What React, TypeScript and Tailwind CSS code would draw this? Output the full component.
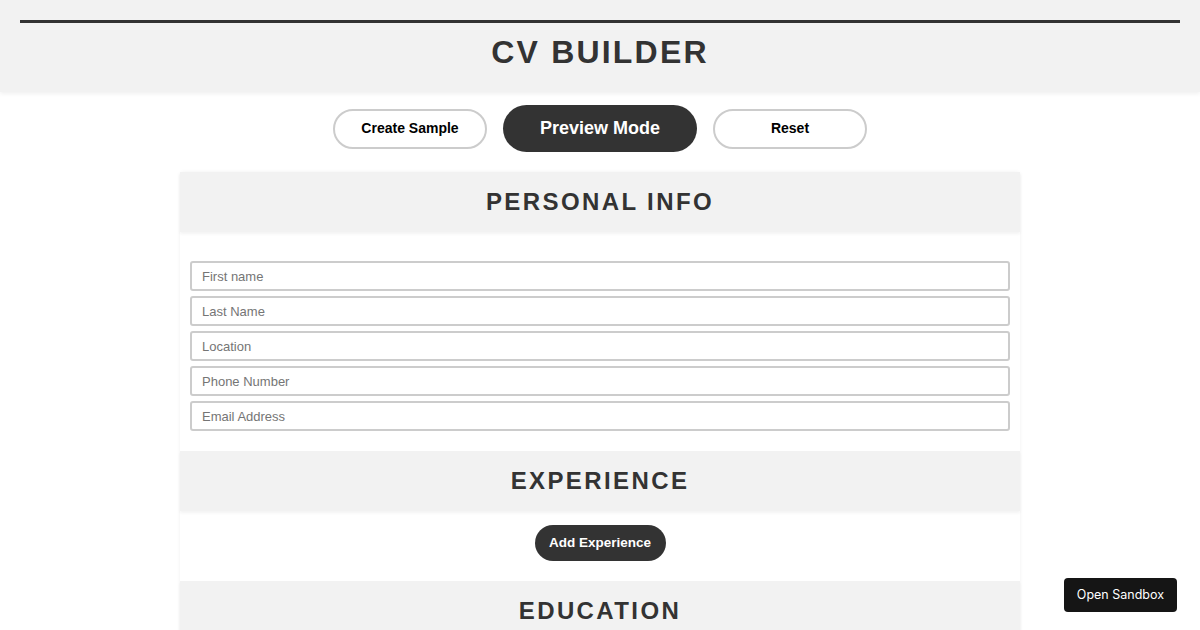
import React from "react";

const font = { fontFamily: '"Liberation Sans", Arial, Helvetica, sans-serif' };

function SectionHeader({ title }: { title: string }) {
  return (
    <div className="h-[60px] bg-[#f2f2f2] flex items-center justify-center shadow-[0_2px_3px_rgba(0,0,0,0.05)]">
      <h2 className="text-[24px] font-bold tracking-[2.4px] text-[#333] leading-none">{title}</h2>
    </div>
  );
}

export default function App() {
  const fields = ["First name", "Last Name", "Location", "Phone Number", "Email Address"];
  return (
    <div className="min-h-[630px] bg-white text-[#333]" style={font}>
      <header className="h-[92px] bg-[#f2f2f2] px-[20px] pt-[20px] shadow-[0_2px_4px_rgba(0,0,0,0.06)]">
        <div className="border-t-[3px] border-[#333] flex justify-center pt-[11px]">
          <h1 className="text-[32px] font-bold tracking-[2.2px] leading-[36px]">CV BUILDER</h1>
        </div>
      </header>
      <div className="flex justify-center items-center gap-[16px] h-[72px] pt-[1px]">
        <button className="w-[154px] h-[40px] rounded-full border-2 border-[#ccc] bg-white text-[14px] font-bold text-black">
          Create Sample
        </button>
        <button className="w-[194px] h-[47px] rounded-full bg-[#333] text-white text-[18px] font-bold">
          Preview Mode
        </button>
        <button className="w-[154px] h-[40px] rounded-full border-2 border-[#ccc] bg-white text-[14px] font-bold text-black">
          Reset
        </button>
      </div>
      <div className="w-[840px] mx-auto mt-[8px] bg-white shadow-[0_0_4px_rgba(0,0,0,0.06)] rounded-t-[4px]">
        <SectionHeader title="PERSONAL INFO" />
        <div className="px-[10px] pt-[29px] pb-[20px] flex flex-col gap-[5px]">
          {fields.map((f) => (
            <input
              key={f}
              placeholder={f}
              className="h-[30px] w-full border-2 border-[#ccc] rounded-[3px] px-[10px] text-[13px] text-[#333] placeholder:text-[#757575] outline-none"
              style={font}
            />
          ))}
        </div>
        <SectionHeader title="EXPERIENCE" />
        <div className="flex justify-center pt-[14px] pb-[20px]">
          <button className="w-[131px] h-[36px] rounded-full bg-[#333] text-white text-[13.5px] font-bold">
            Add Experience
          </button>
        </div>
        <SectionHeader title="EDUCATION" />
        <div className="h-[60px]" />
      </div>
      <div
        className="fixed right-[23px] bottom-[18px] h-[34px] px-[13px] flex items-center bg-[#151515] text-white text-[12.5px] rounded-[4px]"
        style={{ fontFamily: 'Inter, "Noto Sans", sans-serif' }}
      >
        Open Sandbox
      </div>
    </div>
  );
}
